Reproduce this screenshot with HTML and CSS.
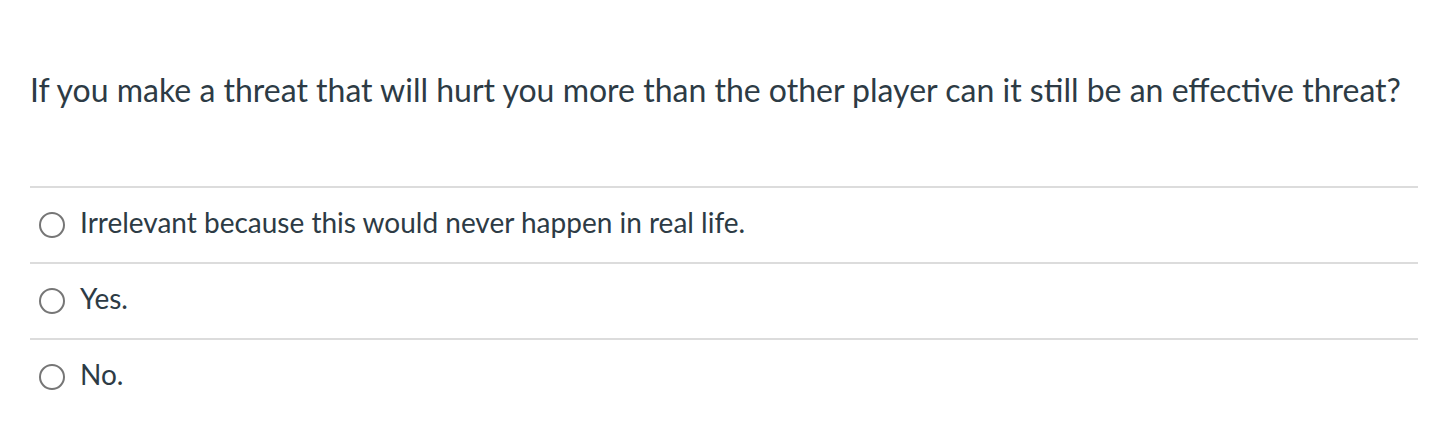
FILE: index.html
```html
<!DOCTYPE html>
<html>
<head>
<meta charset="utf-8">
<link rel="stylesheet" href="styles.css">
</head>
<body>
<div class="quiz">
  <div class="question">If you make a threat that will hurt you more than the other player can it still be an effective threat?</div>
  <div class="answers">
    <label class="answer"><span class="radio"></span><span class="text">Irrelevant because this would never happen in real life.</span></label>
    <label class="answer"><span class="radio"></span><span class="text">Yes.</span></label>
    <label class="answer"><span class="radio"></span><span class="text">No.</span></label>
  </div>
</div>
</body>
</html>
```
FILE: styles.css
```css
html, body {
  margin: 0;
  padding: 0;
  background: #ffffff;
}
body {
  font-family: Lato, "Liberation Sans", sans-serif;
  color: #2d3b45;
}
.quiz {
  padding: 0 22px 0 30px;
}
.question {
  font-size: 32px;
  line-height: 40px;
  padding-top: 70px;
  height: 186px;
  box-sizing: border-box;
}
.answers {
  display: flex;
  flex-direction: column;
}
.answer {
  display: flex;
  align-items: center;
  gap: 15px;
  height: 76px;
  box-sizing: border-box;
  border-top: 2px solid #dcdcdc;
  padding-left: 9px;
  font-size: 28px;
}
.radio {
  width: 22px;
  height: 22px;
  border: 2px solid #767676;
  border-radius: 50%;
  flex: none;
}
.text {
  padding-bottom: 7px;
}
```
